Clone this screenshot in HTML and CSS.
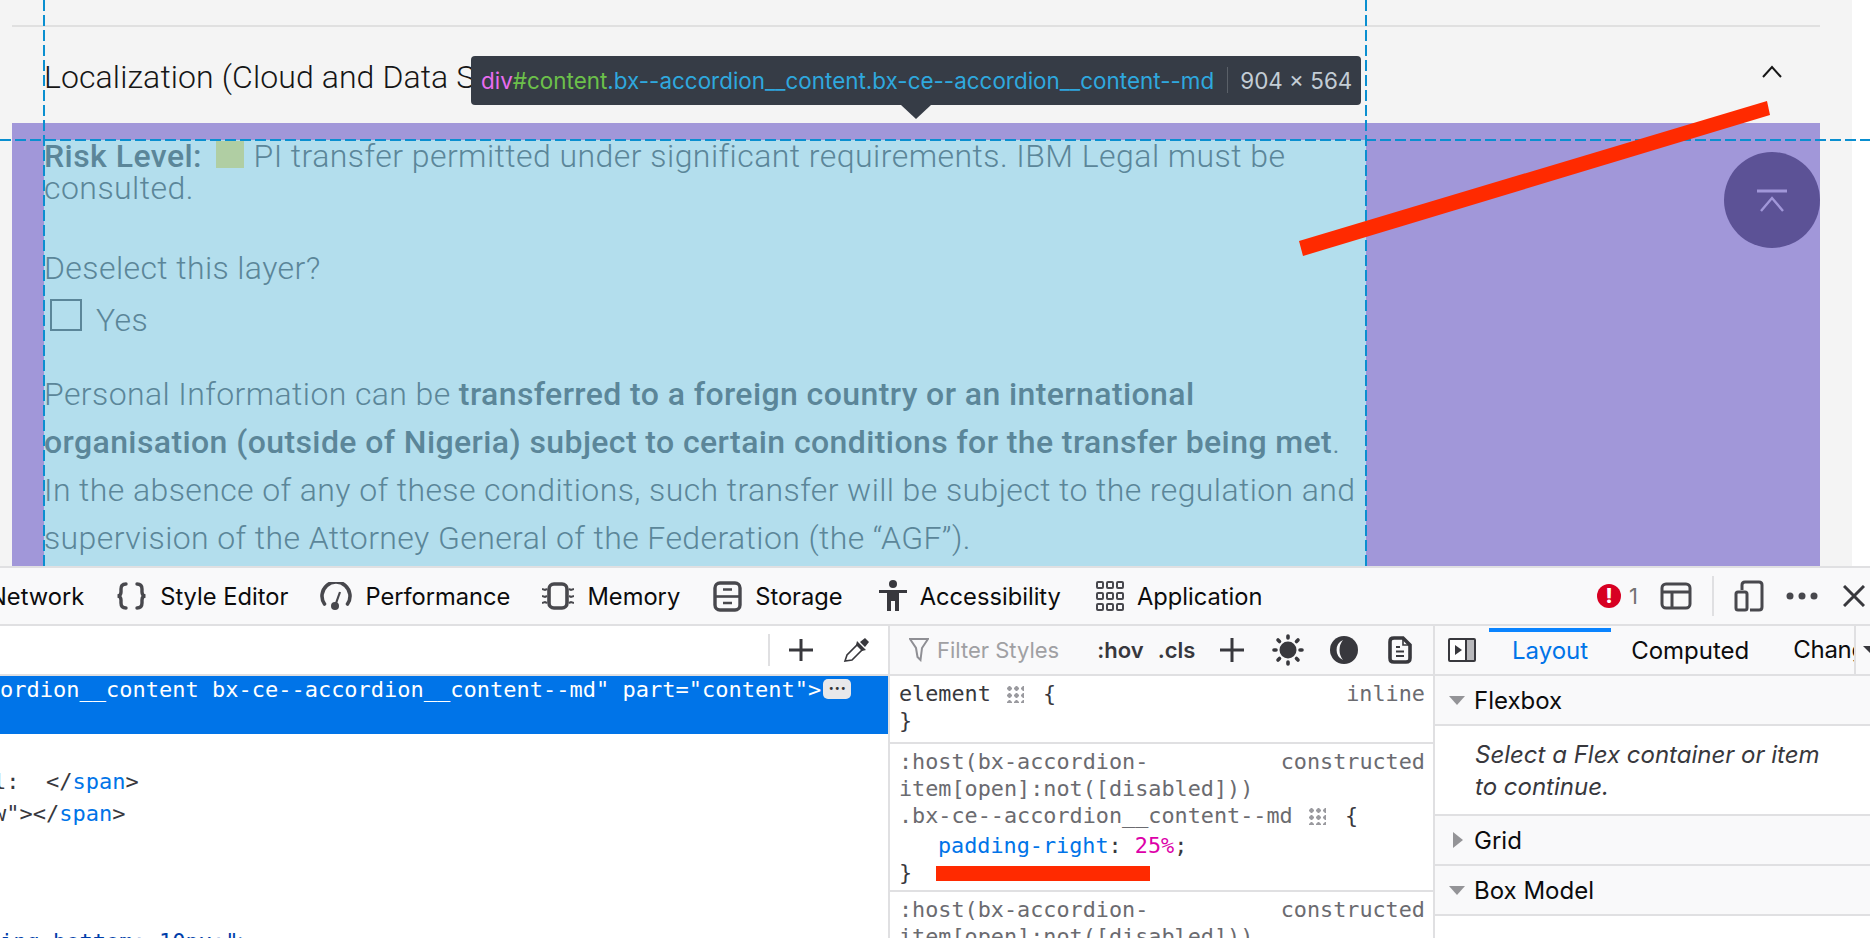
FILE: index.html
```html
<!DOCTYPE html>
<html lang="en">
<head>
<meta charset="utf-8">
<title>Localization accordion inspected in DevTools</title>
<link rel="stylesheet" href="styles.css">
</head>
<body>
<div class="app">
  <section class="page">
    <div class="accordion">
      <div class="acc-rule"></div>
      <div class="acc-head">
        <span class="acc-title">Localization (Cloud and Data Storage)</span>
        <svg class="acc-chevron" width="22" height="14" viewBox="0 0 22 14"><path d="M2 12 L11 2 L20 12" fill="none" stroke="#161616" stroke-width="2"/></svg>
      </div>
      <div class="acc-body">
        <div class="acc-content">
          <p class="risk"><b>Risk Level:</b> <span class="swatch"></span> PI transfer permitted under significant requirements. IBM Legal must be consulted.</p>
          <p class="deselect">Deselect this layer?</p>
          <label class="check"><span class="box"></span><span>Yes</span></label>
          <p class="para">Personal Information can be <b>transferred to a foreign country or an international organisation (outside of Nigeria) subject to certain conditions for the transfer being met</b>.<br>In the absence of any of these conditions, such transfer will be subject to the regulation and supervision of the Attorney General of the Federation (the “AGF”).</p>
        </div>
      </div>
    </div>
    <div class="guide guide-v guide-l"></div>
    <div class="guide guide-v guide-r"></div>
    <div class="guide guide-h"></div>
    <div class="tip">
      <span class="tip-sel"><span class="t-tag">div</span><span class="t-id">#content</span><span class="t-cls">.bx--accordion__content.bx-ce--accordion__content--md</span></span>
      <span class="tip-sep"></span>
      <span class="tip-dim">904 × 564</span>
      <span class="tip-arrow"></span>
    </div>
    <div class="top-btn">
      <svg width="32" height="24" viewBox="0 0 32 24"><path d="M1 3 H31" stroke="#a197d9" stroke-width="3"/><path d="M5 23 L16 10 L27 23" fill="none" stroke="#a197d9" stroke-width="2.4"/></svg>
    </div>
    <svg class="red-line" width="480" height="160" viewBox="0 0 480 160"><polygon points="468,1 471,15 4,156 0,141" fill="#ff2a00"/></svg>
  </section>

  <section class="devtools">
    <div class="toolbar">
      <span class="tab tab-first">Network</span>
      <span class="tab">
        <svg width="31" height="28" viewBox="0 0 31 28"><path d="M10 2 C6 2 5 4 5 7 V10 C5 12 4 14 1.500 14 C4 14 5 16 5 18 V21 C5 24 6 26 10 26 M21 2 C25 2 26 4 26 7 V10 C26 12 27 14 29.500 14 C27 14 26 16 26 18 V21 C26 24 25 26 21 26" fill="none" stroke="#48484d" stroke-width="3.4" stroke-linecap="round"/></svg>
        Style Editor</span>
      <span class="tab">
        <svg width="32" height="29" viewBox="0 0 32 29"><path d="M4.500 22 A14 14 0 1 1 27.500 22" fill="none" stroke="#48484d" stroke-width="3.6" stroke-linecap="round"/><path d="M15 24 L20 10" stroke="#48484d" stroke-width="2.2"/><circle cx="15" cy="24" r="4" fill="#48484d"/></svg>
        Performance</span>
      <span class="tab">
        <svg width="32" height="28" viewBox="0 0 32 28" fill="none" stroke="#48484d"><rect x="7" y="2" width="18" height="24" rx="5" stroke-width="3.6"/><path d="M0 7 L3 8 L5 7 M0 14 L3 15 L5 14 M0 21 L3 20 L5 21 M32 7 L29 8 L27 7 M32 14 L29 15 L27 14 M32 21 L29 20 L27 21" stroke-width="2"/></svg>
        Memory</span>
      <span class="tab">
        <svg class="ic-store" width="29" height="31" viewBox="0 0 29 31" fill="none" stroke="#48484d"><rect x="2" y="2" width="25" height="27" rx="5" stroke-width="3.4"/><path d="M2 15.500 H27" stroke-width="2.6"/><path d="M10 8.500 H19 M10 22 H19" stroke-width="2.4"/></svg>
        Storage</span>
      <span class="tab">
        <svg class="ic-access" width="28" height="32" viewBox="0 0 28 32"><circle cx="14" cy="4" r="4" fill="#38383d"/><path d="M0 10 H28 V13 H20 V31 H16 V21 H12 V31 H8 V13 H0 Z" fill="#38383d"/></svg>
        Accessibility</span>
      <span class="tab">
        <svg class="ic-app" width="28" height="30" viewBox="0 0 28 30" fill="none" stroke="#48484d" stroke-width="2"><rect x="1" y="1" width="6" height="6" rx="1"/><rect x="11" y="1" width="6" height="6" rx="1"/><rect x="21" y="1" width="6" height="6" rx="1"/><rect x="1" y="12" width="6" height="6" rx="1"/><rect x="11" y="12" width="6" height="6" rx="1"/><rect x="21" y="12" width="6" height="6" rx="1"/><rect x="1" y="23" width="6" height="6" rx="1"/><rect x="11" y="23" width="6" height="6" rx="1"/><rect x="21" y="23" width="6" height="6" rx="1"/></svg>
        Application</span>
      <div class="tool-right">
        <span class="err-dot">!</span>
        <span class="err-count">1</span>
        <svg class="ic-layout" width="32" height="28" viewBox="0 0 32 28" fill="none" stroke="#48484d" stroke-width="3"><rect x="2" y="2" width="28" height="24" rx="4"/><path d="M2 10 H30 M12 10 V26"/></svg>
        <span class="tool-sep"></span>
        <svg class="ic-resp" width="30" height="32" viewBox="0 0 30 32" fill="none" stroke="#48484d" stroke-width="3"><path d="M8 10 V5 C8 3 9 2 11 2 H25 C27 2 28 3 28 5 V27 C28 29 27 30 25 30 H16"/><rect x="2" y="12" width="11" height="18" rx="2"/></svg>
        <svg class="ic-dots" width="32" height="8" viewBox="0 0 32 8" fill="#48484d"><circle cx="4" cy="4" r="3.5"/><circle cx="16" cy="4" r="3.5"/><circle cx="28" cy="4" r="3.5"/></svg>
        <svg class="ic-close" width="22" height="22" viewBox="0 0 22 22"><path d="M1 1 L21 21 M21 1 L1 21" stroke="#38383d" stroke-width="3"/></svg>
      </div>
    </div>

    <div class="panels">
      <div class="markup">
        <div class="markup-bar">
          <span class="bar-sep"></span>
          <svg class="ic-mplus" width="26" height="24" viewBox="0 0 26 24"><path d="M13 1 V23 M1 12 H25" stroke="#38383d" stroke-width="3"/></svg>
          <svg class="ic-drop" width="27" height="26" viewBox="0 0 27 26"><path d="M2 24 L4 18 L15 7 L20 12 L9 23 Z" fill="none" stroke="#38383d" stroke-width="1.6"/><path d="M14 4 L23 13 L19 14 L13 8 Z M17 5 L22 1 L26 5 L22 10 Z" fill="#38383d"/></svg>
        </div>
        <div class="sel-row"><span>ordion__content bx-ce--accordion__content--md" part="content"&gt;</span><span class="pill">•••</span></div>
        <div class="code code-first"><span class="c-dark">l:&nbsp;&nbsp;&lt;/</span><span class="c-blue">span</span><span class="c-dark">&gt;</span></div>
        <div class="code"><span class="c-dark">w"&gt;&lt;/</span><span class="c-blue">span</span><span class="c-dark">&gt;</span></div>
        <div class="code"></div>
        <div class="code"></div>
        <div class="code c-attr">ing-bottom: 10px;"&gt;</div>
      </div>

      <div class="rules">
        <div class="rules-bar">
          <svg class="ic-funnel" width="20" height="24" viewBox="0 0 20 24"><path d="M1 1 H19 L13 10 L11.500 22 L8.500 19 L7 10 Z" fill="none" stroke="#8f8f94" stroke-width="2"/></svg>
          <span class="filter">Filter Styles</span>
          <span class="pseudo pseudo-hov">:hov</span>
          <span class="pseudo pseudo-cls">.cls</span>
          <svg class="ic-plus" width="24" height="24" viewBox="0 0 24 24"><path d="M12 0 V24 M0 12 H24" stroke="#38383d" stroke-width="3"/></svg>
          <svg class="ic-sun" width="32" height="32" viewBox="0 0 32 32"><circle cx="16" cy="16" r="8.500" fill="#38383d"/><path d="M16 2 V4 M16 28 V30 M2 16 H4 M28 16 H30 M6 6 L7.500 7.500 M24.500 24.500 L26 26 M6 26 L7.500 24.500 M24.500 7.500 L26 6" stroke="#38383d" stroke-width="3.6" stroke-linecap="round"/></svg>
          <svg class="ic-moon" width="28" height="28" viewBox="0 0 28 28"><circle cx="14" cy="14" r="14" fill="#38383d"/><path d="M13 4 A11 11 0 0 0 13 24 A16 16 0 0 1 13 4 Z" fill="#f9f9fa"/></svg>
          <svg class="ic-doc" width="24" height="28" viewBox="0 0 24 28" fill="none" stroke="#38383d" stroke-width="3.6"><path d="M6 2 H15 L22 9 V22 C22 25 21 26 18 26 H6 C3 26 2 25 2 22 V6 C2 3 3 2 6 2 Z"/><path d="M15 2 V9 H22" stroke-width="1.600"/><path d="M8 11 H12 M8 15.500 H16 M8 20 H16" stroke-width="2"/></svg>
        </div>
        <div class="rule rule-first">
          <div class="r-line"><span class="r-source r-gray">inline</span><span class="r-sel">element</span> <span class="grid-ic"></span> {</div>
          <div class="r-line">}</div>
        </div>
        <div class="rule">
          <div class="r-line r-gray"><span class="r-source">constructed</span>:host(bx-accordion-</div>
          <div class="r-line r-gray">item[open]:not([disabled]))</div>
          <div class="r-line"><span class="r-gray">.bx-ce--accordion__content--md</span> <span class="grid-ic"></span> {</div>
          <div class="r-line r-decl"><span class="c-blue">padding-right</span>: <span class="c-pink">25%</span>;</div>
          <div class="r-line">}<span class="red-bar"></span></div>
        </div>
        <div class="rule">
          <div class="r-line r-gray"><span class="r-source">constructed</span>:host(bx-accordion-</div>
          <div class="r-line r-gray">item[open]:not([disabled]))</div>
        </div>
      </div>

      <div class="side">
        <div class="side-tabs">
          <svg class="ic-panel" width="28" height="24" viewBox="0 0 28 24"><rect x="1" y="1" width="26" height="22" rx="1" fill="#fff" stroke="#38383d" stroke-width="2"/><rect x="19" y="2" width="7" height="20" fill="#b8b8bb"/><path d="M18 1 V23" stroke="#38383d" stroke-width="2"/><path d="M7 7 L14 12 L7 17 Z" fill="#38383d"/></svg>
          <span class="s-active">Layout</span>
          <span class="s-comp">Computed</span>
          <span class="s-chan"><span class="s-clip">Changes</span></span>
          <span class="s-more"></span>
        </div>
        <div class="sec-head"><span class="tri tri-down"></span>Flexbox</div>
        <div class="sec-body">Select a Flex container or item to continue.</div>
        <div class="sec-head"><span class="tri tri-right"></span>Grid</div>
        <div class="sec-head"><span class="tri tri-down"></span>Box Model</div>
      </div>
    </div>
  </section>
</div>
</body>
</html>
```
FILE: styles.css
```css
* { box-sizing: border-box; }
html, body { margin: 0; padding: 0; overflow: hidden; background: #fff; }
.app { width: 1870px; height: 938px; display: flex; flex-direction: column; overflow: hidden; }

/* page */
.page { position: relative; height: 566px; overflow: hidden; background: linear-gradient(to right, #f4f4f4 1852px, #fff 1852px); font-family: Roboto, "Liberation Sans", sans-serif; }
.accordion { width: 1808px; margin-left: 12px; padding-top: 25px; }
.acc-rule { height: 2px; background: #e0e0e0; }
.acc-head { height: 96px; padding: 0 37px 0 32px; display: flex; justify-content: space-between; align-items: flex-start; }
.acc-title { font-size: 32px; font-weight: 300; line-height: 36px; margin-top: 32px; color: #161616; white-space: nowrap; letter-spacing: 0.1px; }
.acc-chevron { margin-top: 38px; }
.acc-body { background: #a197d9; padding: 17px 0 0 32px; height: 443px; }
.acc-content { width: 1322px; height: 426px; background: #b3deed; color: #5b8699; font-size: 32px; font-weight: 300; letter-spacing: 0.4px; }
.acc-content p { margin: 0; }
.acc-content b { font-weight: 500; }
.acc-content .risk { line-height: 32px; width: 1300px; letter-spacing: 0.45px; }
.swatch { display: inline-block; width: 28px; height: 27px; background: #b0cea3; vertical-align: -1px; margin: 0 1px 0 6px; }
.acc-content .deselect { line-height: 40px; margin-top: 44px; }
.check { display: flex; align-items: center; gap: 14px; margin: 14px 0 0 6px; height: 36px; }
.box { width: 32px; height: 32px; border: 2px solid #5b8699; margin-bottom: 10px; }
.acc-content .para { line-height: 48px; margin-top: 32px; }

.guide { position: absolute; }
.guide-v { top: 0; bottom: 0; width: 2px; background: repeating-linear-gradient(to bottom, #0a8fd0 0 11px, transparent 11px 15px); }
.guide-l { left: 43px; }
.guide-r { left: 1365px; }
.guide-h { left: 0; right: 0; top: 139px; height: 2px; background: repeating-linear-gradient(to right, #0a8fd0 0 11px, transparent 11px 15px); }

.tip { position: absolute; left: 471px; top: 56px; width: 890px; height: 49px; padding-bottom: 1px; background: #363c46; border-radius: 4px; display: flex; align-items: center; padding-left: 10px; font-family: Inter, sans-serif; white-space: nowrap; font-size: 22.45px; }
.t-tag { color: #e96cf0; }
.t-id { color: #6cc04a; }
.t-cls { color: #2fa8de; }
.tip-sep { width: 1px; height: 26px; background: #5a6068; margin-left: 13px; }
.tip-dim { color: #c3cdd6; margin-left: 12px; }
.tip-arrow { position: absolute; left: 430px; top: 49px; width: 0; height: 0; border-left: 15px solid transparent; border-right: 15px solid transparent; border-top: 14px solid #363c46; }

.top-btn { position: absolute; left: 1724px; top: 152px; width: 96px; height: 96px; border-radius: 50%; background: #5c5296; display: flex; align-items: center; justify-content: center; }
.red-line { position: absolute; left: 1299px; top: 100px; }

/* devtools */
.devtools { height: 372px; background: #fff; font-family: Inter, "Liberation Sans", sans-serif; color: #0c0c0d; border-top: 2px solid #e0e0e2; }
.toolbar { height: 58px; background: #f9f9fa; border-bottom: 2px solid #e0e0e2; display: flex; align-items: center; gap: 32px; font-size: 23.7px; white-space: nowrap; }
.tab { display: flex; align-items: center; gap: 13px; }
.tab-first { margin-left: -11px; }
.ic-store { margin-left: 1px; }
.ic-access { margin-left: 4px; }
.ic-app { margin-left: 3px; }
.tool-right { margin-left: auto; display: flex; align-items: center; padding-right: 5px; }
.err-dot { width: 24px; height: 24px; border-radius: 50%; background: #d70022; color: #fff; font-weight: 800; font-size: 20px; display: flex; align-items: center; justify-content: center; }
.err-count { color: #737373; margin-left: 8px; width: 12px; font-size: 22px; }
.ic-layout { margin-left: 19px; }
.tool-sep { width: 2px; height: 40px; background: #e0e0e2; margin: 0 20px; }
.ic-dots { margin-left: 22px; }
.ic-close { margin-left: 25px; }

.panels { display: flex; height: 312px; overflow: hidden; }
.markup { width: 890px; flex: none; border-right: 2px solid #e0e0e2; font-family: "DejaVu Sans Mono", monospace; font-size: 22px; white-space: nowrap; overflow: hidden; }
.markup-bar { height: 50px; border-bottom: 2px solid #e0e0e2; display: flex; align-items: center; justify-content: flex-end; padding-right: 18px; }
.bar-sep { width: 2px; height: 32px; background: #e0e0e2; }
.ic-mplus { margin-left: 18px; }
.ic-drop { margin-left: 29px; }
.sel-row { height: 58px; background: #0074e8; color: #fff; display: flex; align-items: flex-start; line-height: 28px; }
.pill { width: 28px; height: 20px; background: #e8e8ea; color: #333; border-radius: 5px; font-size: 10px; line-height: 20px; text-align: center; margin: 3px 0 0 2px; }
.code { height: 32px; line-height: 32px; margin-left: -7px; }
.code-first { margin-top: 32px; }
.c-dark { color: #38383d; }
.c-blue { color: #0074e8; }
.c-attr { color: #003eaa; margin-top: 32px; margin-left: 0; }
.c-pink { color: #dd00a9; }

.rules { width: 545px; flex: none; border-right: 2px solid #e0e0e2; font-family: "DejaVu Sans Mono", monospace; font-size: 21.8px; color: #38383d; white-space: nowrap; }
.rules-bar { height: 50px; background: #f9f9fa; border-bottom: 2px solid #e0e0e2; display: flex; align-items: center; padding-left: 19px; font-family: Inter, sans-serif; font-size: 22px; }
.filter { color: #a0a0a3; margin-left: 8px; }
.pseudo { font-weight: 600; color: #38383d; }
.pseudo-hov { margin-left: 38px; }
.pseudo-cls { margin-left: 14px; }
.ic-plus { margin-left: 25px; }
.ic-sun { margin-left: 28px; }
.ic-moon { margin-left: 26px; }
.ic-doc { margin-left: 30px; }
.rule { padding: 4px 8px 4px 9px; border-bottom: 2px solid #e0e0e2; }
.rule-first { padding: 4px 8px 8px 9px; }
.r-line { line-height: 27px; height: 27px; position: relative; }
.r-source { float: right; color: #6b6b70; }
.r-gray { color: #6b6b70; }
.r-sel { color: #38383d; }
.r-decl { padding-left: 39px; height: 30px; line-height: 33px; color: #38383d; }
.grid-ic { display: inline-block; width: 18px; height: 18px; vertical-align: -2px; margin: 0 6px 0 2px; background: radial-gradient(circle, #9a9a9f 0 2px, transparent 2.5px) 0 0 / 7px 7px; }
.red-bar { position: absolute; left: 37px; top: 7px; width: 214px; height: 15px; background: #ff2a00; }

.side { flex: 1; background: #fff; font-size: 24px; color: #0c0c0d; white-space: nowrap; overflow: hidden; }
.side-tabs { height: 50px; background: #f9f9fa; border-bottom: 2px solid #e0e0e2; display: flex; align-items: center; position: relative; }
.ic-panel { margin-left: 13px; flex: none; }
.s-active { color: #0074e8; margin-left: 36px; position: relative; flex: none; }
.s-active::before { content: ""; position: absolute; left: -23px; right: -23px; top: -8px; height: 4px; background: #0a84ff; }
.s-comp { margin-left: 43px; flex: none; }
.s-chan { margin-left: 44px; width: 63px; height: 48px; line-height: 48px; overflow: hidden; border-right: 2px solid #e0e0e2; flex: none; }
.s-clip { display: block; width: 61px; overflow: hidden; letter-spacing: -0.3px; }
.s-more { width: 0; height: 0; margin-left: 7px; flex: none; border-left: 8px solid transparent; border-right: 8px solid transparent; border-top: 8px solid #38383d; }
.sec-head { height: 50px; background: #f9f9fa; border-bottom: 2px solid #e0e0e2; display: flex; align-items: center; padding-left: 14px; }
.tri { display: block; width: 0; height: 0; margin-right: 9px; }
.tri-down { border-left: 8px solid transparent; border-right: 8px solid transparent; border-top: 9px solid #949497; }
.tri-right { border-top: 8px solid transparent; border-bottom: 8px solid transparent; border-left: 10px solid #949497; margin-left: 4px; margin-right: 11px; }
.sec-body { height: 90px; padding: 13px 30px 0 40px; line-height: 32px; font-style: italic; color: #38383d; white-space: normal; background: #fff; border-bottom: 2px solid #e0e0e2; }
```
